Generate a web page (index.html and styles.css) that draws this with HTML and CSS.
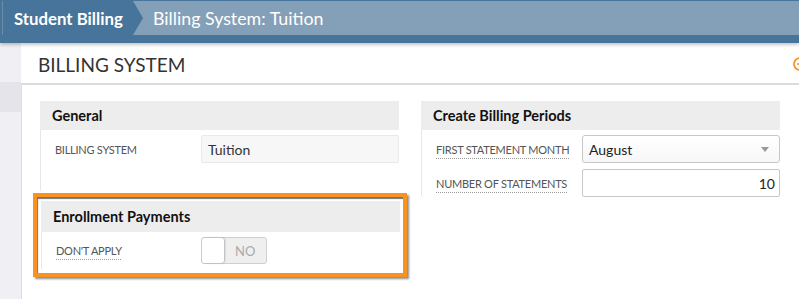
FILE: index.html
```html
<!DOCTYPE html>
<html>
<head>
<meta charset="utf-8">
<link rel="stylesheet" href="styles.css">
</head>
<body>
<div class="topbar">
  <div class="crumbs">
    <div class="crumb crumb-first">Student Billing</div>
    <div class="crumb crumb-current">Billing System: Tuition</div>
  </div>
</div>
<div class="layout">
  <aside class="sidebar">
    <div class="side-top"></div>
    <div class="side-active"></div>
    <div class="side-rest"></div>
  </aside>
  <main class="main">
    <header class="page-header">
      <h1 class="page-title">BILLING SYSTEM</h1>
      <svg class="header-icon" width="16" height="16" viewBox="0 0 16 16">
        <circle cx="8" cy="8" r="6" fill="none" stroke="#f79433" stroke-width="1.8"/>
        <path d="M8 4.5 V8 H5" fill="none" stroke="#f79433" stroke-width="1.6"/>
      </svg>
    </header>
    <div class="content">
      <div class="column">
        <section class="panel panel-general">
          <div class="panel-head">General</div>
          <div class="panel-body">
            <div class="row">
              <span class="label">BILLING SYSTEM</span>
              <div class="field field-readonly">Tuition</div>
            </div>
          </div>
        </section>
        <div class="highlight">
          <section class="panel">
            <div class="panel-head panel-head-tall">Enrollment Payments</div>
            <div class="panel-body body-toggle">
              <div class="row">
                <span class="label dotted">DON'T APPLY</span>
                <div class="toggle">
                  <span class="knob"></span>
                  <span class="toggle-text">NO</span>
                </div>
              </div>
            </div>
          </section>
        </div>
      </div>
      <div class="column">
        <section class="panel">
          <div class="panel-head">Create Billing Periods</div>
          <div class="panel-body">
            <div class="row">
              <span class="label dotted">FIRST STATEMENT MONTH</span>
              <div class="field field-select">August<span class="caret"></span></div>
            </div>
            <div class="row">
              <span class="label dotted">NUMBER OF STATEMENTS</span>
              <div class="field field-number">10</div>
            </div>
          </div>
        </section>
      </div>
    </div>
  </main>
</div>
</body>
</html>
```
FILE: styles.css
```css
* { box-sizing: border-box; }
html, body { margin: 0; padding: 0; }
body {
  width: 799px;
  height: 299px;
  overflow: hidden;
  background: #fff;
  font-family: Lato, "Open Sans", sans-serif;
  color: #333;
}
.topbar {
  background: #46749a;
  padding: 1px 0 8px 0;
  position: relative;
  z-index: 2;
  box-shadow: 0 2px 3px rgba(0,0,0,0.22);
}
.crumbs {
  display: flex;
  height: 34px;
  background: #84a0b8;
}
.crumb {
  display: flex;
  align-items: center;
  color: #fff;
  white-space: nowrap;
}
.crumb-first {
  width: 143px;
  padding-left: 14px;
  background: #46749a;
  font-weight: bold;
  font-size: 16.8px;
  clip-path: polygon(0 0, 133px 0, 143px 50%, 133px 100%, 0 100%);
  box-shadow: inset 2px 0 #46749a, inset 3px 0 #6c8daa;
}
.crumb-current {
  padding-left: 10px;
  font-size: 17.8px;
}
.layout {
  display: flex;
  height: 256px;
}
.sidebar {
  width: 21px;
  flex: none;
  display: flex;
  flex-direction: column;
  background: #f0f0f4;
}
.side-top { height: 39px; }
.side-active { height: 30px; background: #e4e4ea; }
.side-rest { flex: 1; }
.main {
  flex: 1;
  overflow: hidden;
  min-width: 0;
}
.page-header {
  height: 42px;
  display: flex;
  align-items: center;
  justify-content: space-between;
  padding-left: 17px;
  border-bottom: 2px solid #dcdcdc;
}
.page-title {
  margin: 0;
  font-weight: normal;
  font-size: 19px;
  color: #333;
  letter-spacing: 0;
  padding-top: 2px;
}
.header-icon {
  margin-right: -9px;
  margin-top: 1px;
}
.content {
  display: flex;
  gap: 22px;
  padding: 16px 19px 0 18px;
  border-left: 1px solid #dddde2;
  height: 214px;
}
.column {
  flex: 1;
  display: flex;
  flex-direction: column;
}
.column:first-child { flex: 0 0 359px; }
.panel-head {
  height: 29px;
  background: #ededed;
  padding-left: 12px;
  display: flex;
  align-items: center;
  font-weight: bold;
  font-size: 14.5px;
  color: #111;
}
.panel-head-tall { height: 31px; }
.panel-body {
  border-left: 1px solid #e6e6e6;
  padding: 5px 0 0 14px;
  display: flex;
  flex-direction: column;
  gap: 6px;
  border-bottom-left-radius: 3px;
}
.panel-general .panel-body { height: 62px; }
.row {
  display: flex;
  align-items: center;
}
.label {
  width: 146px;
  flex: none;
  font-size: 11px;
  color: #555;
  letter-spacing: -0.25px;
}
.label.dotted {
  text-decoration: underline dotted #999;
  text-underline-offset: 4px;
  text-decoration-thickness: 1px;
}
.field {
  flex: 1;
  height: 28px;
  display: flex;
  align-items: center;
  font-size: 14px;
  padding: 0 6px;
  color: #222;
}
.field-readonly {
  background: #f7f7f7;
  border: 1px solid #e9e9e9;
  border-radius: 2px;
  color: #333;
}
.field-select {
  border: 1px solid #c8c8c8;
  border-radius: 3px;
  background: linear-gradient(#fff, #f7f7f7);
  justify-content: space-between;
  padding-right: 10px;
}
.caret {
  width: 0;
  height: 0;
  border-left: 4.5px solid transparent;
  border-right: 4.5px solid transparent;
  border-top: 5px solid #999;
}
.field-number {
  border: 1px solid #c8c8c8;
  border-radius: 2px;
  justify-content: flex-end;
  padding-right: 4px;
}
.highlight {
  margin: 1px -8px 0 -7px;
  border: 4px solid #f7931e;
  padding: 4px 3px 3px 4px;
  box-shadow: 2px 2px 2px rgba(0,0,0,0.45), inset 1px 2px 1px rgba(0,0,0,0.55);
  background: #fff;
}
.body-toggle { padding-top: 5px; padding-bottom: 6px; }
.toggle {
  width: 66px;
  height: 27px;
  border: 1px solid #cfcfcf;
  border-radius: 3px;
  background: #efefef;
  display: flex;
  align-items: center;
  position: relative;
  margin-left: -1px;
}
.knob {
  position: absolute;
  left: 0;
  top: 0;
  width: 22px;
  height: 25px;
  background: #fff;
  border-radius: 3px;
  box-shadow: 1px 0 2px rgba(0,0,0,0.25);
}
.toggle-text {
  margin-left: 33px;
  font-size: 13px;
  color: #aaa;
}
```
